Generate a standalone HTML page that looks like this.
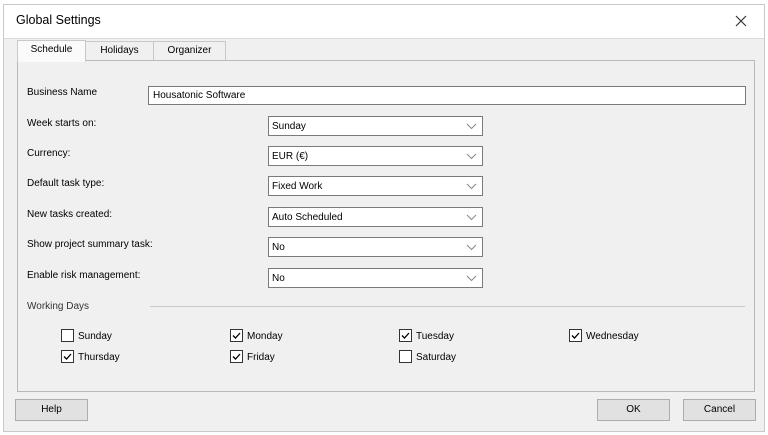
<!DOCTYPE html>
<html><head><style>
body{margin:0;width:768px;height:435px;background:#fff;font-family:"Liberation Sans",sans-serif;font-size:10px;color:#000;position:relative;overflow:hidden}
.a{position:absolute}
.win{left:3px;top:4px;width:760px;height:426px;border:1px solid #c8c8c8;background:#f0f0f0}
.title{left:4px;top:5px;width:760px;height:33px;background:#fff;border-bottom:1px solid #dcdcdc}
.panel{left:17px;top:60px;width:736px;height:330px;border:1px solid #b9b9b9;background:#f0f0f0}
.tab{top:41px;height:18px;border:1px solid #c8c8c8;border-bottom:none;background:#f0f0f0;text-align:center;line-height:18px}
.in{background:#fff;border:1px solid #7a7a7a;height:17px;line-height:17px;padding-left:4px;box-sizing:content-box}
.cb{width:215px;height:20px;line-height:20px;background:#fff;border:1px solid #7a7a7a;padding-left:3px;box-sizing:border-box}
.cb svg{position:absolute;right:5px;top:6px}
.lbl{left:27px}
.chk{width:11px;height:11px;border:1px solid #333;background:#fff}
.btn{height:20px;border:1px solid #adadad;background:#e1e1e1;text-align:center;line-height:20px}
</style></head><body>
<div class="a win"></div>
<div class="a title"></div>
<div class="a" style="left:16px;top:13px;font-size:12.5px">Global Settings</div>
<svg class="a" style="left:735px;top:15px" width="12" height="12"><path d="M1 1L11 11M11 1L1 11" stroke="#333" stroke-width="1.2"/></svg>
<div class="a panel"></div>
<div class="a tab" style="left:17px;width:67px;top:40px;height:21px;background:#fafafa;z-index:2">Schedule</div>
<div class="a tab" style="left:85px;width:67px">Holidays</div>
<div class="a tab" style="left:153px;width:71px">Organizer</div>
<div class="a lbl" style="top:87px">Business Name</div>
<div class="a in" style="left:148px;top:86px;width:592px">Housatonic Software</div>
<div class="a lbl" style="top:118px">Week starts on:</div>
<div class="a lbl" style="top:148px">Currency:</div>
<div class="a lbl" style="top:178px">Default task type:</div>
<div class="a lbl" style="top:209px">New tasks created:</div>
<div class="a lbl" style="top:239px">Show project summary task:</div>
<div class="a lbl" style="top:270px">Enable risk management:</div>
<div class="a cb" style="left:268px;top:116px">Sunday<svg width="11" height="7"><path d="M1 1L5.5 5.5L10 1" fill="none" stroke="#888"/></svg></div>
<div class="a cb" style="left:268px;top:146px">EUR (€)<svg width="11" height="7"><path d="M1 1L5.5 5.5L10 1" fill="none" stroke="#888"/></svg></div>
<div class="a cb" style="left:268px;top:176px">Fixed Work<svg width="11" height="7"><path d="M1 1L5.5 5.5L10 1" fill="none" stroke="#888"/></svg></div>
<div class="a cb" style="left:268px;top:207px">Auto Scheduled<svg width="11" height="7"><path d="M1 1L5.5 5.5L10 1" fill="none" stroke="#888"/></svg></div>
<div class="a cb" style="left:268px;top:237px">No<svg width="11" height="7"><path d="M1 1L5.5 5.5L10 1" fill="none" stroke="#888"/></svg></div>
<div class="a cb" style="left:268px;top:268px">No<svg width="11" height="7"><path d="M1 1L5.5 5.5L10 1" fill="none" stroke="#888"/></svg></div>
<div class="a" style="left:27px;top:301px;color:#333">Working Days</div>
<div class="a" style="left:150px;top:306px;width:595px;height:1px;background:#c8c8c8"></div>

<div class="a chk" style="left:61px;top:329px"></div><div class="a" style="left:78px;top:331px">Sunday</div>
<div class="a chk" style="left:230px;top:329px"><svg width="11" height="11"><path d="M2 5.5L4.5 8L9 3" fill="none" stroke="#000" stroke-width="1.3"/></svg></div><div class="a" style="left:247px;top:331px">Monday</div>
<div class="a chk" style="left:399px;top:329px"><svg width="11" height="11"><path d="M2 5.5L4.5 8L9 3" fill="none" stroke="#000" stroke-width="1.3"/></svg></div><div class="a" style="left:416px;top:331px">Tuesday</div>
<div class="a chk" style="left:569px;top:329px"><svg width="11" height="11"><path d="M2 5.5L4.5 8L9 3" fill="none" stroke="#000" stroke-width="1.3"/></svg></div><div class="a" style="left:586px;top:331px">Wednesday</div>
<div class="a chk" style="left:61px;top:350px"><svg width="11" height="11"><path d="M2 5.5L4.5 8L9 3" fill="none" stroke="#000" stroke-width="1.3"/></svg></div><div class="a" style="left:78px;top:352px">Thursday</div>
<div class="a chk" style="left:230px;top:350px"><svg width="11" height="11"><path d="M2 5.5L4.5 8L9 3" fill="none" stroke="#000" stroke-width="1.3"/></svg></div><div class="a" style="left:247px;top:352px">Friday</div>
<div class="a chk" style="left:399px;top:350px"></div><div class="a" style="left:416px;top:352px">Saturday</div>

<div class="a btn" style="left:15px;top:399px;width:71px">Help</div>
<div class="a btn" style="left:597px;top:399px;width:71px">OK</div>
<div class="a btn" style="left:683px;top:399px;width:71px">Cancel</div>
</body></html>
